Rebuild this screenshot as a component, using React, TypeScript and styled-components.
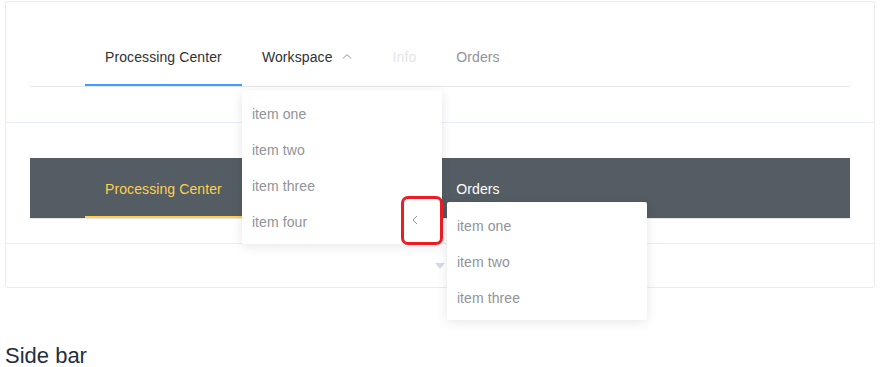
import React from 'react'
import styled, { createGlobalStyle } from 'styled-components'

const GlobalStyle = createGlobalStyle`
    body {
        margin: 0;
        background: #fff;
        font-family: 'Liberation Sans', Arial, sans-serif;
    }
`

const Page = styled.div`
    padding: 1px 7px 0 5px;
`

const DemoBlock = styled.div`
    border: 1px solid #ebebeb;
    border-radius: 3px;
`

const Source = styled.div<{ $top: number; $bottom: number }>`
    padding: ${p => p.$top}px 24px ${p => p.$bottom}px;
    & + & {
        border-top: 1px solid #eaeefb;
    }
`

const Control = styled.div`
    height: 43px;
    border-top: 1px solid #eaeefb;
    display: flex;
    align-items: center;
    justify-content: center;
`

const Caret = styled.span`
    width: 0;
    height: 0;
    border-left: 5px solid transparent;
    border-right: 5px solid transparent;
    border-top: 6px solid #d3dce6;
`

const Menu = styled.ul<{ $dark?: boolean }>`
    display: flex;
    margin: 0;
    padding: 0 0 0 55px;
    list-style: none;
    background: ${p => (p.$dark ? '#545c64' : '#fff')};
    border-bottom: 1px solid #e6e6e6;
`

const MenuItem = styled.li<{ $color: string; $accent?: string; $disabled?: boolean; $sub?: boolean }>`
    position: relative;
    box-sizing: border-box;
    height: 60px;
    line-height: 60px;
    padding: 1px ${p => (p.$sub ? 40 : 20)}px 0 20px;
    font-size: 14px;
    letter-spacing: 0.1px;
    white-space: nowrap;
    color: ${p => p.$color};
    opacity: ${p => (p.$disabled ? 0.25 : 1)};
    border-bottom: 2px solid ${p => p.$accent || 'transparent'};
`

const TitleArrow = styled.svg`
    position: absolute;
    right: 21px;
    top: 27px;
`

const Popup = styled.ul<{ $nested?: boolean }>`
    position: absolute;
    z-index: 10;
    left: ${p => (p.$nested ? 'calc(100% + 5px)' : '0')};
    top: ${p => (p.$nested ? '-1px' : 'calc(100% + 6px)')};
    width: 200px;
    margin: 0;
    padding: 5px 0;
    list-style: none;
    background: #fff;
    border-radius: 2px;
    box-shadow: 0 2px 12px 0 rgba(0, 0, 0, 0.1);
    letter-spacing: 0.1px;
`

const PopupItem = styled.li`
    position: relative;
    box-sizing: border-box;
    height: 36px;
    line-height: 36px;
    padding: 1px 10px 0;
    font-size: 14px;
    color: #909399;
`

const SideArrow = styled.svg`
    position: absolute;
    right: 24px;
    top: 12px;
`

const Marker = styled.span`
    position: absolute;
    right: -1px;
    top: -7px;
    width: 42px;
    height: 49px;
    box-sizing: border-box;
    border: 3px solid #ed1c24;
    border-radius: 7px;
`

const Heading = styled.h3`
    margin: 57px 0 0;
    font-size: 22px;
    line-height: 22px;
    font-weight: 400;
    color: #1f2f3d;
`

const ArrowUp = ({ color }: { color: string }) => (
    <TitleArrow width="10" height="6" viewBox="0 0 10 6">
        <polyline points="1,5.5 5,1.5 9,5.5" fill="none" stroke={color} strokeWidth="1" />
    </TitleArrow>
)

const WorkspacePopup = () => (
    <Popup>
        <PopupItem>item one</PopupItem>
        <PopupItem>item two</PopupItem>
        <PopupItem>item three</PopupItem>
        <PopupItem>
            item four
            <SideArrow width="6" height="10" viewBox="0 0 6 10">
                <polyline points="5,1 1,5 5,9" fill="none" stroke="#909399" strokeWidth="1" />
            </SideArrow>
            <Marker />
            <Popup $nested>
                <PopupItem>item one</PopupItem>
                <PopupItem>item two</PopupItem>
                <PopupItem>item three</PopupItem>
            </Popup>
        </PopupItem>
    </Popup>
)

const App: React.FC = () => {
    return (
        <Page>
            <GlobalStyle />
            <DemoBlock>
                <Source $top={24} $bottom={35}>
                    <Menu>
                        <MenuItem $color="#303133" $accent="#409eff">Processing Center</MenuItem>
                        <MenuItem $color="#303133" $sub>
                            Workspace
                            <ArrowUp color="#909399" />
                            <WorkspacePopup />
                        </MenuItem>
                        <MenuItem $color="#909399" $disabled>Info</MenuItem>
                        <MenuItem $color="#909399">Orders</MenuItem>
                    </Menu>
                </Source>
                <Source $top={35} $bottom={24}>
                    <Menu $dark>
                        <MenuItem $color="#ffd04b" $accent="#ffd04b">Processing Center</MenuItem>
                        <MenuItem $color="#fff" $sub>
                            Workspace
                            <ArrowUp color="#909399" />
                        </MenuItem>
                        <MenuItem $color="#fff" $disabled>Info</MenuItem>
                        <MenuItem $color="#fff">Orders</MenuItem>
                    </Menu>
                </Source>
                <Control>
                    <Caret />
                </Control>
            </DemoBlock>
            <Heading>Side bar</Heading>
        </Page>
    )
}

export default App
